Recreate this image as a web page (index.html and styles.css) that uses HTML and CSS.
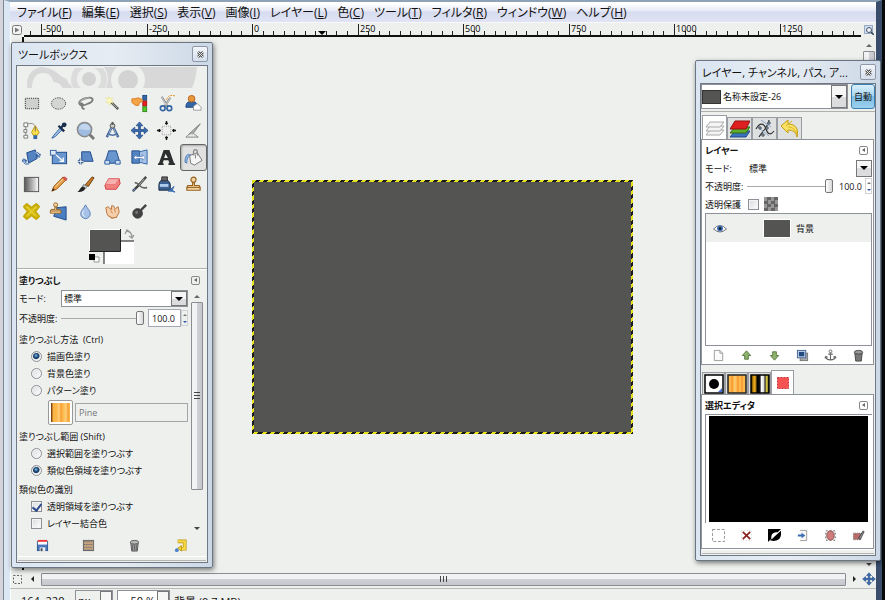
FILE: index.html
```
<!DOCTYPE html>
<html lang="ja">
<head>
    <meta charset="UTF-8">
    <meta name="viewport" content="width=device-width, initial-scale=1.0">
    <title>GIMP</title>
    <link rel="stylesheet" href="styles.css">
</head>
<body>
    <div class="desktop">
        <!-- Image window -->
        <main class="main-window">
            <nav class="menubar">
                <a href="#">ファイル(<u>F</u>)</a>
                <a href="#">編集(<u>E</u>)</a>
                <a href="#">選択(<u>S</u>)</a>
                <a href="#">表示(<u>V</u>)</a>
                <a href="#">画像(<u>I</u>)</a>
                <a href="#">レイヤー(<u>L</u>)</a>
                <a href="#">色(<u>C</u>)</a>
                <a href="#">ツール(<u>T</u>)</a>
                <a href="#">フィルタ(<u>R</u>)</a>
                <a href="#">ウィンドウ(<u>W</u>)</a>
                <a href="#">ヘルプ(<u>H</u>)</a>
            </nav>

            <div class="view">
                <button class="view-corner" aria-label="menu">
                    <svg width="10" height="10" viewBox="0 0 10 10"><rect x=".5" y=".5" width="9" height="9" rx="2" fill="#f4f4f4" stroke="#777"/><path d="M3 2.500L7.500 5L3 7.500z" fill="#777"/></svg>
                </button>
                <svg class="ruler" id="ruler"></svg>
                <button class="view-corner" aria-label="zoom">
                    <svg width="10" height="10" viewBox="0 0 10 10"><rect x=".5" y=".5" width="8" height="8" fill="#d4dfef" stroke="#4a6a9c" stroke-dasharray="1 1"/><circle cx="5" cy="5" r="2.500" fill="#eef3fa" stroke="#456"/><path d="M7 7l3 3" stroke="#345" stroke-width="1.500"/></svg>
                </button>

                <div class="ruler-v"></div>
                <div class="canvas"><div class="image"></div></div>
                <div class="vscroll">
                    <span class="arrow up"></span>
                    <span class="vthumb"></span>
                    <span class="arrow down"></span>
                </div>

                <button class="view-corner" aria-label="quick mask">
                    <svg width="9" height="9" viewBox="0 0 9 9"><rect x=".5" y=".5" width="8" height="8" fill="none" stroke="#666" stroke-dasharray="2 1.500"/></svg>
                </button>
                <div class="hscroll">
                    <span class="arrow left"></span>
                    <span class="hthumb"><i></i><i></i><i></i></span>
                    <span class="arrow right"></span>
                </div>
                <button class="view-corner" aria-label="navigate">
                    <svg width="14" height="14" viewBox="0 0 20 20"><use href="#move"/></svg>
                </button>
            </div>

            <footer class="statusbar">
                <span class="coords">164, 220</span>
                <span class="combo unit"><select aria-label="unit"><option>px</option></select><span class="combo-arrow plain"></span></span>
                <span class="combo zoom"><select aria-label="zoom"><option>50 %</option></select><span class="combo-arrow plain"></span></span>
                <span>背景 (0.7 MB)</span>
            </footer>
        </main>

        <!-- Toolbox -->
        <section class="window toolbox">
            <header class="titlebar"><h2>ツールボックス</h2><button class="close" aria-label="close"><svg width="7" height="7" viewBox="0 0 7 7"><path d="M1 1l5 5M6 1l-5 5" stroke="#555" stroke-width="2.500"/><path d="M1 1l5 5M6 1l-5 5" stroke="#eee" stroke-width="1"/></svg></button></header>
            <div class="window-body">
                <svg class="wilber" viewBox="0 0 190 22" width="190" height="22">
                    <path d="M10 22C9 8 16 2 25 1q9 1 14 5 6 6 14 8V1H180q-1 12-5 21z" fill="#d7d8d7"/>
                    <path d="M15 22c0-9 4-15 11-15s10 5 10 9c5 0 8 3 10 6z" fill="#eef0ee"/>
                    <path d="M35 1h22L53 20C49 10 43 4 35 1z" fill="#eef0ee"/>
                    <circle cx="72" cy="13" r="19" fill="#eef0ee"/><circle cx="111" cy="14" r="17" fill="#eef0ee"/>
                    <path d="M58 2a19 19 0 00-2 20h32A19 19 0 0086 2z" fill="#dbdcdb"/>
                    <circle cx="72" cy="13" r="12" fill="#eef0ee"/>
                    <circle cx="72" cy="13" r="7" fill="#d2d3d2"/><circle cx="111" cy="14" r="10" fill="#d2d3d2"/>
                </svg>

                <div class="tools">
                    <button aria-label="rect select"><svg viewBox="0 0 20 20"><rect x="3.500" y="4.500" width="14" height="11" fill="#cfd1cf" stroke="#222" stroke-dasharray="1 1"/></svg></button>
                    <button aria-label="ellipse select"><svg viewBox="0 0 20 20"><ellipse cx="10" cy="10" rx="7.500" ry="6" fill="#d4d6d4" stroke="#444" stroke-dasharray="1.500 1"/></svg></button>
                    <button aria-label="free select"><svg viewBox="0 0 20 20"><path d="M6 12C0 10 5 5 13 4c6-1 6 4 0 6-4 2-8 3-9 1 0-2 4-1 3 1-1 2-1 3 2 4" fill="none" stroke="#7b7b7b" stroke-width="2"/><path d="M4 9C5 6 10 4 14 4" fill="none" stroke="#ccc" stroke-width=".8"/></svg></button>
                    <button aria-label="fuzzy select"><svg viewBox="0 0 20 20"><path d="M8 8l8 8" stroke="#555" stroke-width="2.500"/><path d="M8 8l7 7" stroke="#aaa" stroke-width="1"/><path d="M6 3l1 2 3-1-1 3 2 2-3 0-1 3-1-3-3 0 2-2-2-3 3 1z" fill="#fffbc4" stroke="#ece083" stroke-width=".6"/></svg></button>
                    <button aria-label="color select"><svg viewBox="0 0 20 20"><rect x="13.500" y="1.500" width="4" height="5" fill="#3465a4" stroke="#204a87"/><rect x="13.500" y="7.500" width="4" height="5" fill="#e22" stroke="#a11"/><rect x="13.500" y="13.500" width="4" height="5" fill="#5c2" stroke="#382"/><path d="M2 5h3l4-1 4 2v2l-3 1-1 3H6L2 9z" fill="#f6a345" stroke="#d98026"/></svg></button>
                    <button aria-label="scissors"><svg viewBox="0 0 20 20"><path d="M5 3l6 10M14 4L8 13" stroke="#777" stroke-width="2"/><path d="M5 3l5 9M14 4l-5 8" stroke="#ddd"/><circle cx="6" cy="15" r="2.500" fill="none" stroke="#3465a4" stroke-width="1.700"/><circle cx="13" cy="15" r="2.500" fill="none" stroke="#3465a4" stroke-width="1.700"/><path d="M10 6c2-5 5-5 9-4" fill="none" stroke="#e98b17" stroke-dasharray="2 1"/></svg></button>
                    <button aria-label="foreground select"><svg viewBox="0 0 20 20"><path d="M2 14c0-5 2-6 6-6s6 1 6 6z" fill="#3465a4" stroke="#204a87"/><circle cx="8" cy="5" r="3.500" fill="#e9963a" stroke="#b3641a"/><path d="M10 17v-4l4-3 4 4v3z" fill="#fff" stroke="#999"/></svg></button>

                    <button aria-label="paths"><svg viewBox="0 0 20 20"><path d="M4 3v14M4 4c6-3 9-1 10 2" fill="none" stroke="#888"/><path d="M2 2h4v4H2zM2 9h3v3H2zM2 15h4v3H2z" fill="#fff" stroke="#777"/><path d="M14 5l4 7-2 3h-4l-2-3z" fill="#fbe04e" stroke="#b89412"/><path d="M14 6v5" stroke="#765"/><rect x="12" y="15" width="4" height="4" fill="#3465a4"/></svg></button>
                    <button aria-label="color picker"><svg viewBox="0 0 20 20"><path d="M12 7L5 15l-2 3 1 0 3-2 7-7" fill="#9fc0e4" stroke="#3465a4"/><path d="M10 5l6 6M13 7l3-4" stroke="#1b2f4c" stroke-width="2.500"/><circle cx="16" cy="4" r="2.500" fill="#1b2f4c"/></svg></button>
                    <button aria-label="magnify"><svg viewBox="0 0 20 20"><path d="M13 13l6 6" stroke="#777" stroke-width="3"/><circle cx="9" cy="9" r="7.500" fill="#9fbbe2" stroke="#888" stroke-width="1.500"/><path d="M3 9a6 6 0 0112 0c-4 2-7-1-12 0z" fill="#c3d5ee"/></svg></button>
                    <button aria-label="measure"><svg viewBox="0 0 20 20"><path d="M10 5L4 17M10 5l6 12" stroke="#3b5f92" stroke-width="2.500"/><path d="M10 5L5 16M10 5l5 11" stroke="#c4d2e6" stroke-width=".8"/><path d="M5 13q5 4 10 0" fill="none" stroke="#4a6fa4" stroke-width="1.500"/><circle cx="10" cy="5" r="2.500" fill="#ccc" stroke="#555"/><path d="M10 1v3" stroke="#555" stroke-width="2"/></svg></button>
                    <button aria-label="move"><svg viewBox="0 0 20 20"><g id="move" fill="#3a6cb0" stroke="#1f4680" stroke-width=".8"><path d="M10 1l3.500 4H11v4h4V6.500l4 3.500-4 3.500V11h-4v4h2.500L10 19l-3.500-4H9v-4H5v2.500L1 10l4-3.500V9h4V5H6.500z"/></g></svg></button>
                    <button aria-label="align"><svg viewBox="0 0 20 20"><rect x="5.500" y="5.500" width="9" height="9" fill="#eee" stroke="#999" stroke-dasharray="1 1"/><path d="M10 0v4M8.500 2.500h3M10 20v-4M8.500 17.500h3M0 10h4M2.500 8.500v3M20 10h-4M17.500 8.500v3" stroke="#111" stroke-width="1.500"/></svg></button>
                    <button aria-label="crop"><svg viewBox="0 0 20 20"><path d="M2 17L17 3 9 14M2 17h13l-5-4" fill="#e6e6e6" stroke="#888"/><path d="M5 14L17 3l-7 9z" fill="#c4c4c4" stroke="#888"/></svg></button>

                    <button aria-label="rotate"><svg viewBox="0 0 20 20"><path d="M5 5l9-3 2 9-9 5z" fill="#5584c2" stroke="#204a87"/><path d="M14 5c3 0 4 2 4 4m1-3l-1 3-3-1M7 17c-3 0-5-1-5-5m-2 2l2-2 3 2" fill="none" stroke="#3465a4" stroke-width="2"/><path d="M14 5c3 0 4 2 4 4M7 17c-3 0-5-1-5-5" fill="none" stroke="#fff" stroke-width=".8"/></svg></button>
                    <button aria-label="scale"><svg viewBox="0 0 20 20"><rect x="3.500" y="4.500" width="15" height="12" fill="#6a96cf" stroke="#204a87"/><rect x="1.500" y="2.500" width="6" height="5" fill="#dfe9f5" stroke="#3465a4"/><path d="M7 7l8 7M15 10v4h-4" stroke="#fff" stroke-width="1.300" fill="none"/></svg></button>
                    <button aria-label="shear"><svg viewBox="0 0 20 20"><path d="M6 4h9l3 10H6z" fill="#5e8bc8" stroke="#204a87"/><path d="M2 14h6M5 11v6" stroke="#204a87" stroke-width="3"/><path d="M2 14h6M5 11v6" stroke="#fff" stroke-width="1"/></svg></button>
                    <button aria-label="perspective"><svg viewBox="0 0 20 20"><path d="M6 3h8l4 13H2z" fill="#6a96cf" stroke="#204a87"/><path d="M2 13h5v4H2zM13 13h5v4h-5z" fill="#cfdef0" stroke="#3465a4"/></svg></button>
                    <button aria-label="flip"><svg viewBox="0 0 20 20"><path d="M2 3h8v13H2z" fill="#5584c2" stroke="#204a87"/><path d="M10 4l8-2v15l-8-2z" fill="#a5c2e6" stroke="#3465a4"/><path d="M4 10l3-3v2h6V7l3 3-3 3v-2H7v2z" fill="#fff" stroke="#3465a4" stroke-width=".6"/></svg></button>
                    <button aria-label="text"><svg viewBox="0 0 20 20"><path d="M7 2h6l5 14h1v2h-7v-2h1l-1-3H7l-1 3h1v2H1v-2h1zM9 6l-1.500 4.500h4z" fill="#2c2e2f" fill-rule="evenodd"/></svg></button>
                    <button class="active" aria-label="bucket fill"><svg viewBox="0 0 20 20"><path d="M6 8l8-3 5 8-8 5-4-2z" fill="#f6f6f6" stroke="#777"/><path d="M10 8V4c0-3 4-3 4 0v4" fill="none" stroke="#888" stroke-width="1.300"/><path d="M12 7v4" stroke="#777"/><path d="M7 7C3 6 1 8 1 15l2 1c0-4 1-7 4-9z" fill="#8fb4e0" stroke="#3b6cae" stroke-width=".7"/></svg></button>

                    <button aria-label="blend"><svg viewBox="0 0 20 20"><defs><linearGradient id="gr"><stop offset="0" stop-color="#555"/><stop offset="1" stop-color="#fff"/></linearGradient></defs><rect x="2.500" y="2.500" width="15" height="15" fill="url(#gr)" stroke="#555"/></svg></button>
                    <button aria-label="pencil"><svg viewBox="0 0 20 20"><path d="M3 17l2-5L15 2l3 3L8 15z" fill="#e5a04d" stroke="#9a5812"/><path d="M14 3l3-1 2 2-1 2z" fill="#e25a5a" stroke="#a33" stroke-width=".6"/><path d="M3 17l1.500-3 1.500 1.500z" fill="#222"/><path d="M7 12l8-8" stroke="#fbd89c"/></svg></button>
                    <button aria-label="paintbrush"><svg viewBox="0 0 20 20"><path d="M10 10l7-8 2 1-6 9z" fill="#c77a2a" stroke="#6e3c08"/><path d="M8 10l4 2-2 2-3-2z" fill="#ccc" stroke="#777"/><path d="M7 12l3 2c-2 4-5 4-9 4 3-1 3-5 6-6z" fill="#222"/></svg></button>
                    <button aria-label="eraser"><svg viewBox="0 0 20 20"><path d="M6 4h11l1 5-4 6H3l-1-4z" fill="#f2807f" stroke="#d04040"/><path d="M6 4h11l-4 6H2.500z" fill="#f8b0ae" stroke="#df6b6b" stroke-width=".7"/></svg></button>
                    <button aria-label="airbrush"><svg viewBox="0 0 20 20"><path d="M17 2L8 12l-5 5" stroke="#444" stroke-width="2.500"/><path d="M5 8c3 0 4 2 5 3s3 4 8 2" fill="none" stroke="#666" stroke-width="1.800"/><path d="M15 4l-5 6" stroke="#ddd" stroke-width=".8"/><path d="M2 18l3-4 1 1z" fill="#5b90d6"/></svg></button>
                    <button aria-label="ink"><svg viewBox="0 0 20 20"><path d="M5 5h5q4 2 4 5v6H2v-6q0-3 3-5z" fill="#3b5f8e" stroke="#1c2c42"/><path d="M5 2h6v4H5z" fill="#666" stroke="#333"/><path d="M3 11h9" stroke="#aecbec" stroke-width="3"/><path d="M12 17l6-5-2 4 3 2-4-1z" fill="#3b6cae" stroke="#3b6cae"/></svg></button>
                    <button aria-label="clone"><svg viewBox="0 0 20 20"><g id="stamp" fill="#f3d3a2" stroke="#96631f" stroke-width="1.200"><circle cx="10" cy="5" r="2.700"/><path d="M9 8h2v3h5l1 2v3H3v-3l1-2h5z"/><path d="M3 13h14"/></g></svg></button>

                    <button aria-label="heal"><svg viewBox="0 0 20 20"><path d="M5 2l5 4 5-4 3 3-4 5 4 5-3 3-5-4-5 4-3-3 4-5-4-5z" fill="#d8be10" stroke="#c4aa0a" stroke-width="2" stroke-linejoin="round"/><path d="M5 5l10 10M15 5L5 15" stroke="#ecd84a" stroke-width="1.500" stroke-dasharray="1 1"/></svg></button>
                    <button aria-label="perspective clone"><svg viewBox="0 0 20 20"><path d="M8 6l10-1v14L5 15z" fill="#4a7fc4" stroke="#204a87"/><g transform="translate(-1 -1) scale(.8)"><use href="#stamp"/></g></svg></button>
                    <button aria-label="blur"><svg viewBox="0 0 20 20"><path d="M10 3c2 4 5 6 5 9.500a5 5 0 01-10 0C5 9 8 7 10 3z" fill="#a6c2e8" stroke="#5c7fb5"/><path d="M8 9c-2 3-1 5 1 6" stroke="#fff" fill="none"/></svg></button>
                    <button aria-label="smudge"><svg viewBox="0 0 20 20"><path d="M3 6l2-1 4 3 0-4 2 0 2 3 3-2 1 6-3 5-5 1-4-3-1-2z" fill="#f4cfa9" stroke="#b9733b"/><path d="M5 14l5 3 5-1M8 9l2 3M12 7l1 4" stroke="#c9854f" fill="none"/></svg></button>
                    <button aria-label="dodge"><svg viewBox="0 0 20 20"><circle cx="8" cy="12" r="5" fill="#444" stroke="#333"/><path d="M11 9l6-6" stroke="#444" stroke-width="2.500"/><circle cx="7" cy="11" r="1.500" fill="#777"/></svg></button>
                </div>

                <div class="colors">
                    <svg width="46" height="36" viewBox="0 0 46 36">
                        <path d="M15 12h30v23H15z" fill="#fff"/><path d="M15 35V12h30" fill="none" stroke="#111"/>
                        <path d="M0 0h32v23H0z" fill="#fff"/><path d="M1 1h30v21H1z" fill="#545452"/><path d="M31.500 0v22.500H0" fill="none" stroke="#222"/>
                        <path d="M5 28h5v5H5z" fill="#fff" stroke="#999"/><path d="M0 25h6v6H0z" fill="#000"/>
                        <path d="M36 5l2-4 3 2M37 2c4 0 6 3 6 7M40 7l3 2 2-3" fill="none" stroke="#999" stroke-width="1.300"/>
                    </svg>
                </div>

                <div class="options">
                    <div class="dock-head"><h3>塗りつぶし</h3><button class="tab-menu" aria-label="tab menu"></button></div>
                    <div class="scroller">
                        <form class="option-list">
                            <div class="row">
                                <label for="mode">モード:</label>
                                <span class="combo"><select id="mode"><option>標準</option></select><span class="combo-arrow"></span></span>
                            </div>
                            <div class="row">
                                <label for="opacity">不透明度:</label>
                                <input type="range" id="opacity" value="100">
                                <span class="spin"><input type="text" value="100.0" aria-label="opacity value"><span class="spin-buttons"></span></span>
                            </div>
                            <h4>塗りつぶし方法&nbsp; (Ctrl)</h4>
                            <label class="choice"><input type="radio" name="fill" checked>描画色塗り</label>
                            <label class="choice"><input type="radio" name="fill">背景色塗り</label>
                            <label class="choice"><input type="radio" name="fill">パターン塗り</label>
                            <div class="pattern"><button type="button" class="pine" aria-label="pattern"></button><input type="text" value="Pine" aria-label="pattern name"></div>
                            <h4>塗りつぶし範囲 (Shift)</h4>
                            <label class="choice"><input type="radio" name="area">選択範囲を塗りつぶす</label>
                            <label class="choice"><input type="radio" name="area" checked>類似色領域を塗りつぶす</label>
                            <h4>類似色の識別</h4>
                            <label class="choice"><input type="checkbox" checked>透明領域を塗りつぶす</label>
                            <label class="choice"><input type="checkbox">レイヤー結合色</label>
                            <div class="row threshold"><input type="range" value="15" aria-label="threshold"><span class="spin"><input type="text" value="15.0" aria-label="threshold value"><span class="spin-buttons"></span></span></div>
                        </form>
                        <div class="dock-scroll">
                            <span class="arrow up"></span>
                            <span class="dock-thumb"><i></i><i></i><i></i></span>
                            <span class="arrow down"></span>
                        </div>
                    </div>
                    <div class="actions">
                        <button aria-label="save"><svg viewBox="0 0 14 14"><rect x="1.500" y="2.500" width="11" height="10" fill="#4a78bd" stroke="#2d5390"/><path d="M2 1h10v5H2z" fill="#fff"/><path d="M2 1h10v2H2z" fill="#e33"/><path d="M4 9h6v4H4z" fill="#eee"/><path d="M5 10h2v3H5z" fill="#345"/></svg></button>
                        <button aria-label="restore"><svg viewBox="0 0 14 14"><rect x="1.500" y="1.500" width="11" height="11" fill="#b9a58c" stroke="#666"/><path d="M2 3h10M2 6h10M2 9h10M2 12h10" stroke="#555" stroke-dasharray="1 1"/><path d="M3 4h9M3 7h9M3 10h9" stroke="#db9d64" stroke-dasharray="2 1"/></svg></button>
                        <button aria-label="delete"><svg viewBox="0 0 14 14"><path d="M3 4h8l-1 9H4z" fill="#999" stroke="#555"/><ellipse cx="7" cy="3.500" rx="4.500" ry="2" fill="#bbb" stroke="#555"/><path d="M5 6v6M7 6v6M9 6v6" stroke="#666"/></svg></button>
                        <button aria-label="reset"><svg viewBox="0 0 14 14"><path d="M4 2.500h7.500v8H7" fill="none" stroke="#b8940c" stroke-width="4"/><path d="M4 2.500h7.500v8H7" fill="none" stroke="#f7d842" stroke-width="2.500"/><path d="M8 7v6l-4-3z" fill="#f7d842" stroke="#b8940c"/><circle cx="3" cy="12" r="2" fill="#4a82cc"/></svg></button>
                    </div>
                </div>
                <div class="grip"></div>
            </div>
        </section>

        <!-- Layers dock -->
        <section class="window dock">
            <header class="titlebar"><h2>レイヤー, チャンネル, パス, ア...</h2><button class="close" aria-label="close"><svg width="7" height="7" viewBox="0 0 7 7"><path d="M1 1l5 5M6 1l-5 5" stroke="#555" stroke-width="2.500"/><path d="M1 1l5 5M6 1l-5 5" stroke="#eee" stroke-width="1"/></svg></button></header>
            <div class="window-body">
                <div class="image-select">
                    <span class="combo"><span class="swatch"></span><select aria-label="image"><option>名称未設定-26</option></select><span class="combo-arrow"></span></span>
                    <button class="auto">自動</button>
                </div>

                <div class="tabs">
                    <button class="current" aria-label="layers"><svg viewBox="0 0 20 20"><g fill="#f4f4f4" stroke="#aaa"><path d="M1 17l4-5h14l-4 5z"/><path d="M1 13l4-5h14l-4 5z"/><path d="M1 9l4-5h14l-4 5z"/></g></svg></button>
                    <button aria-label="channels"><svg viewBox="0 0 20 20"><path d="M0 18l5-6h15l-4 6z" fill="#3b72c0" stroke="#204a87"/><path d="M0 14l5-6h15l-4 6z" fill="#5fae2c" stroke="#2f6b10"/><path d="M0 10l5-8h15l-4 8z" fill="#e02020" stroke="#901010"/></svg></button>
                    <button aria-label="paths"><svg viewBox="0 0 20 20"><path d="M1 10C5 3 9 4 11 10s5 6 8 2M4 18C8 12 13 8 14 1" fill="none" stroke="#333" stroke-width="1.200"/><path d="M6 1l10 7M3 8l11 9" stroke="#8aa6cc"/><path d="M4 8h2v2H4zM11 8h2v2h-2zM7 15h2v2H7zM13 3h2v2h-2z" fill="#fff" stroke="#345"/></svg></button>
                    <button aria-label="history"><svg viewBox="0 0 20 20"><path d="M1 7l7-6v4c7 0 11 4 9 13-1-5-4-7-9-7v3z" fill="#f9e267" stroke="#c79c0c"/><path d="M6 7l6-5M8 8c5 0 8 3 9 8" fill="none" stroke="#d9b422"/></svg></button>
                </div>

                <div class="page">
                    <div class="dock-head"><h3>レイヤー</h3><button class="tab-menu" aria-label="tab menu"></button></div>
                    <div class="row">
                        <label for="lmode">モード:</label>
                        <span class="combo flat"><select id="lmode"><option>標準</option></select><span class="combo-arrow"></span></span>
                    </div>
                    <div class="row">
                        <label for="lopacity">不透明度:</label>
                        <input type="range" id="lopacity" value="100">
                        <span class="spin flat"><input type="text" value="100.0" aria-label="opacity value"><span class="spin-buttons"></span></span>
                    </div>
                    <div class="row lock"><label for="lock">透明保護</label><input type="checkbox" id="lock"><span class="checker"></span></div>
                    <div class="layer-list">
                        <div class="layer">
                            <svg width="14" height="9" viewBox="0 0 14 9"><path d="M.5 5Q7-2 13.500 5 7 11 .5 5z" fill="#fff" stroke="#777"/><circle cx="7" cy="4.500" r="3" fill="#3f74b8"/><circle cx="7" cy="4.500" r="1.300" fill="#111"/></svg>
                            <span class="thumb"></span>
                            <span>背景</span>
                        </div>
                    </div>
                    <div class="actions">
                        <button aria-label="new"><svg viewBox="0 0 14 14"><path d="M2.500 1.500h6l3 3v8h-9zM8.500 1.500v3h3" fill="#fafafa" stroke="#999"/></svg></button>
                        <button aria-label="raise"><svg viewBox="0 0 14 14"><path d="M7 2l4.500 5H9v4H5V7H2.500z" fill="#8fb36f" stroke="#567a3a"/></svg></button>
                        <button aria-label="lower"><svg viewBox="0 0 14 14"><path d="M7 12l4.500-5H9V3H5v4H2.500z" fill="#8fb36f" stroke="#567a3a"/></svg></button>
                        <button aria-label="duplicate"><svg viewBox="0 0 14 14"><rect x="4.500" y="4.500" width="8" height="8" fill="#aaa" stroke="#777"/><rect x="1.500" y="1.500" width="9" height="8" fill="#dbe6f4" stroke="#3b5f92"/><path d="M3 3h6v5H3z" fill="#234a80"/></svg></button>
                        <button aria-label="anchor"><svg viewBox="0 0 14 14"><circle cx="7" cy="2.500" r="1.500" fill="none" stroke="#666"/><path d="M7 4v8M4.500 5.500h5M1.500 8c1 5 10 5 11 0M1 10l1-2 2 1M13 10l-1-2-2 1" fill="none" stroke="#666" stroke-width="1.200"/></svg></button>
                        <button aria-label="delete"><svg viewBox="0 0 14 14"><path d="M3 4h8l-1 9H4z" fill="#777" stroke="#444"/><ellipse cx="7" cy="3.500" rx="4.500" ry="2" fill="#999" stroke="#444"/></svg></button>
                    </div>
                </div>

                <div class="tabs lower">
                    <button aria-label="brushes"><svg viewBox="0 0 20 20"><rect x="1" y="1" width="18" height="18" fill="#fff" stroke="#000" stroke-width="1.500"/><circle cx="10" cy="10" r="5" fill="#000"/><path d="M18 14v4h-4z" fill="#4a6fd0"/></svg></button>
                    <button aria-label="patterns"><svg viewBox="0 0 20 20"><rect x="1" y="1" width="18" height="18" fill="#fdb94d" stroke="#222" stroke-width="1.500"/><path d="M5 2v16M11 2v16M15 2v16" stroke="#f08a24"/><path d="M8 2v16" stroke="#ffd38a"/></svg></button>
                    <button aria-label="gradients"><svg viewBox="0 0 20 20"><defs><linearGradient id="gold"><stop offset="0" stop-color="#3a2500"/><stop offset=".15" stop-color="#d89b10"/><stop offset=".22" stop-color="#f0b020"/><stop offset=".35" stop-color="#000"/><stop offset=".5" stop-color="#111"/><stop offset=".58" stop-color="#fff"/><stop offset=".7" stop-color="#ddd"/><stop offset=".78" stop-color="#333"/><stop offset=".88" stop-color="#f6e04c"/><stop offset="1" stop-color="#000"/></linearGradient></defs><rect x="1" y="1" width="18" height="18" fill="url(#gold)" stroke="#000" stroke-width="1.500"/></svg></button>
                    <button class="current" aria-label="selection"><svg viewBox="0 0 20 20"><rect x="4.500" y="4.500" width="11" height="11" fill="#f55252" stroke="#c33" stroke-dasharray="2 1"/></svg></button>
                </div>

                <div class="page">
                    <div class="dock-head"><h3>選択エディタ</h3><button class="tab-menu" aria-label="tab menu"></button></div>
                    <div class="selection-view"><div class="mask"></div></div>
                    <div class="actions">
                        <button aria-label="all"><svg viewBox="0 0 14 14"><rect x=".5" y=".5" width="13" height="13" fill="none" stroke="#888" stroke-dasharray="3 2"/></svg></button>
                        <button aria-label="none"><svg viewBox="0 0 14 14"><rect x="1.500" y="1.500" width="11" height="11" fill="none" stroke="#ccc" stroke-dasharray="1 2"/><path d="M3 3l8 8M11 3l-8 8" stroke="#8c2020" stroke-width="1.800"/></svg></button>
                        <button aria-label="invert"><svg viewBox="0 0 14 14"><path d="M0 0h14L0 14z" fill="#000"/><path d="M14 2v4c0 4-4 7-8 7l-4-1z" fill="#000"/><path d="M4 11C2 7 6 2 11 4z" fill="#fff"/></svg></button>
                        <button aria-label="to channel"><svg viewBox="0 0 14 14"><path d="M4.500 1.500h7v11h-7" fill="#f6f6f6" stroke="#999"/><path d="M2 6h4V4l4 3-4 3V8H2z" fill="#3a6cb0"/></svg></button>
                        <button aria-label="to path"><svg viewBox="0 0 14 14"><rect x="2" y="2" width="10" height="10" fill="none" stroke="#555" stroke-dasharray="2 2"/><ellipse cx="7" cy="7" rx="4" ry="5" fill="#d07a7a" stroke="#855"/></svg></button>
                        <button aria-label="stroke"><svg viewBox="0 0 14 14"><rect x="1.500" y="4.500" width="8" height="7" fill="#b76a6a" stroke="#777" stroke-dasharray="1 1"/><path d="M7 10l5-8 1 1-4 8z" fill="#999" stroke="#444"/></svg></button>
                    </div>
                </div>
                <div class="grip"></div>
            </div>
        </section>
    </div>

    <script src="ruler.js"></script>
</body>
</html>
```
FILE: styles.css
```
:root {
    --panel: #eef0ee;
    --line: #8e9198;
    --fill: #545452;
    --text: #111;
}

* {
    box-sizing: border-box;
}

body {
    margin: 0;
    font-family: "Open Sans", "Noto Sans CJK JP", sans-serif;
    font-feature-settings: "palt";
    font-size: 9px;
    color: var(--text);
}

h2, h3, h4 {
    margin: 0;
    font-weight: normal;
}

button {
    display: flex;
    align-items: center;
    justify-content: center;
    padding: 0;
    border: none;
    background: none;
    font: inherit;
    color: inherit;
}

input, select {
    margin: 0;
    font: inherit;
    color: inherit;
}

.desktop {
    position: relative;
    height: 100vh;
    overflow: hidden;
    padding: 0 3px 0 4px;
    background: linear-gradient(90deg, #d3d4dc 0, #d3d4dc 50%, #08090b 50%);
}

/* Image window */
.main-window {
    display: flex;
    flex-direction: column;
    height: calc(100% + 12px);
    border-style: solid;
    border-width: 2px 6px 0 6px;
    border-color: #8fa3b8 #3a4e6c #fff #dbe7f3;
    box-shadow: inset 1px 0 #fff, -1px 0 #7c8590;
    background: var(--panel);
}

.menubar {
    display: flex;
    gap: 10px;
    height: 21px;
    padding: 0 7px;
    align-items: center;
    background: linear-gradient(#fff 10%, #e6e9f6 45%, #d7dbef 50%, #e0e4f4);
    border-bottom: 1px solid #f8f8fa;
    font-size: 12px;
}

.menubar a {
    color: var(--text);
    text-decoration: none;
    white-space: nowrap;
}

.view {
    display: grid;
    flex: 1;
    grid-template-columns: 14px 1fr 15px;
    grid-template-rows: 14px 1fr 18px;
}

.view-corner svg {
    display: block;
}

.ruler {
    width: 100%;
    height: 14px;
    border-bottom: 2px solid #111;
    font-size: 9px;
}

.ruler-v {
    border-right: 2px solid #111;
}

.canvas {
    display: flex;
    align-items: center;
    justify-content: center;
    padding-top: 6px;
}

.image {
    width: 381px;
    height: 254px;
    padding: 2px;
    background:
        linear-gradient(var(--fill), var(--fill)) content-box,
        repeating-linear-gradient(135deg, #e6e21c 0, #e6e21c 3px, #1a1a1a 3px, #1a1a1a 6px);
}

.vscroll, .hscroll, .dock-scroll {
    display: flex;
    align-items: center;
    gap: 4px;
}

.vscroll, .dock-scroll {
    flex-direction: column;
}

.vscroll {
    padding: 7px 0 4px;
}

.hscroll {
    gap: 7px;
    padding: 0 5px 0 7px;
}

.arrow {
    border: 3px solid transparent;
}

.arrow.up {
    border-top: none;
    border-bottom-color: #666;
}

.arrow.down {
    border-bottom: none;
    border-top-color: #444;
}

.arrow.left {
    border-left: none;
    border-right-color: #222;
}

.arrow.right {
    border-right: none;
    border-left-color: #222;
}

.hthumb, .vthumb, .dock-thumb {
    display: flex;
    flex: 1;
    align-items: center;
    justify-content: center;
    gap: 1px;
    border: 1px solid #8b8d92;
    border-radius: 1px;
}

.hthumb {
    height: 13px;
    background: linear-gradient(#f0f2f4 45%, #cfcfd6 50%, #c6c6cd);
}

.vthumb, .dock-thumb {
    width: 12px;
    flex-direction: column;
    background: linear-gradient(90deg, #f0f2f4 45%, #cfcfd6 50%, #c6c6cd);
}

.hthumb i {
    width: 2px;
    height: 6px;
    border-left: 1px solid #444;
}

.dock-thumb i {
    width: 6px;
    height: 2px;
    border-top: 1px solid #444;
}

.statusbar {
    display: flex;
    align-items: center;
    gap: 2px;
    height: 24px;
    padding: 1px 11px;
    border-top: 1px solid #b9bbb9;
    font-size: 11px;
}

.coords {
    width: 52px;
}

.statusbar .combo {
    flex: none;
    height: 22px;
    margin-right: 2px;
}

.statusbar .unit {
    width: 38px;
    background: var(--panel);
}

.statusbar .zoom {
    width: 53px;
}

.zoom select {
    text-align: right;
}

/* Floating windows */
.window {
    position: absolute;
    padding: 0 4px 4px;
    border: 1px solid #6c7682;
    border-radius: 2px;
    background: linear-gradient(90deg, #dbe6f2, #e6ecf3 50%, #ccd8e6);
    box-shadow: 1px 2px 5px rgba(0, 0, 0, 0.5);
}

.toolbox {
    top: 42px;
    left: 11px;
    width: 202px;
}

.dock {
    top: 60px;
    right: 4px;
    width: 186px;
}

.titlebar {
    display: flex;
    align-items: center;
    justify-content: space-between;
    height: 22px;
    padding-left: 2px;
    white-space: nowrap;
}

.titlebar h2 {
    font-size: 11px;
}

.close {
    width: 16px;
    height: 16px;
    border: 1px solid #8d98a8;
    border-radius: 2px;
    background: linear-gradient(#f3f6fa, #d5dfeb);
}

.window-body {
    border: 1px solid #6f7884;
    background: var(--panel);
}

.wilber {
    display: block;
}

.tools {
    display: grid;
    grid-template-columns: repeat(7, 27px);
    grid-auto-rows: 27px;
    padding: 2px 1px 0;
}

.tools svg {
    width: 19px;
    height: 19px;
}

.tools .active {
    border: 1px solid #666;
    border-radius: 3px;
    background: #e0e1e0;
    box-shadow: inset 1px 1px 2px #aaa;
}

.colors {
    display: flex;
    justify-content: center;
    height: 44px;
    padding-top: 4px;
    border-bottom: 1px solid #aeb0ae;
}

.options {
    padding: 0 3px 0 2px;
    border-top: 1px solid #fff;
}

.dock-head {
    display: flex;
    align-items: center;
    justify-content: space-between;
    height: 20px;
    padding-right: 4px;
}

.dock-head h3 {
    font-size: 9px;
    font-weight: bold;
}

.tab-menu {
    width: 9px;
    height: 9px;
    border: 1px solid #888;
    border-radius: 2px;
}

.tab-menu::before {
    content: "";
    border: 2px solid transparent;
    border-left: none;
    border-right: 3px solid #666;
}

.scroller {
    display: flex;
    gap: 3px;
    height: 244px;
    overflow: hidden;
}

.option-list {
    flex: 1;
    min-width: 0;
}

.option-list h4 {
    height: 17px;
    margin-top: 2px;
    font-size: 9px;
    line-height: 17px;
}

.row {
    display: flex;
    align-items: center;
    gap: 4px;
    height: 22px;
    white-space: nowrap;
}

.row:first-child {
    height: 17px;
}

.row label {
    width: 38px;
}

.combo {
    display: flex;
    flex: 1;
    align-items: center;
    min-width: 0;
    height: 17px;
    border: 1px solid #8e9198;
    background: #fff;
}

.combo select {
    flex: 1;
    min-width: 0;
    height: 100%;
    padding: 0 2px;
    border: none;
    background: none;
    appearance: none;
}

.combo-arrow {
    display: flex;
    align-items: center;
    justify-content: center;
    align-self: stretch;
    width: 16px;
    border: 1px solid #777;
    background: linear-gradient(#f6f6f6 50%, #dcdcdf 50%);
}

.combo-arrow::before {
    content: "";
    border: 4px solid transparent;
    border-top-color: #000;
    border-bottom: none;
}

.combo-arrow.plain {
    width: 12px;
}

.combo-arrow.plain::before {
    display: none;
}

.combo.flat {
    border: none;
}

input[type="range"] {
    flex: 1;
    min-width: 0;
    height: 14px;
    background: linear-gradient(#a9aba9, #a9aba9) center / 100% 1px no-repeat;
    appearance: none;
}

input[type="range"]::-webkit-slider-thumb {
    width: 8px;
    height: 14px;
    border: 1px solid #777;
    border-radius: 2px;
    background: linear-gradient(90deg, #fff, #d6d7d9);
    appearance: none;
}

.spin {
    display: flex;
    align-items: center;
    width: 40px;
    height: 18px;
}

.spin input {
    flex: 1;
    min-width: 0;
    height: 100%;
    padding: 0 3px;
    border: 1px solid #a3a8b4;
    background: #fff;
}

.spin-buttons {
    display: flex;
    flex-direction: column;
    align-items: center;
    justify-content: space-around;
    width: 7px;
    height: 16px;
    border: 1px solid #cfd1d4;
}

.spin-buttons::before, .spin-buttons::after {
    content: "";
    border: 2px solid transparent;
}

.spin-buttons::before {
    border-top: none;
    border-bottom-color: #777;
}

.spin-buttons::after {
    border-bottom: none;
    border-top-color: #2f55a4;
}

.spin.flat {
    width: 35px;
}

.spin.flat input {
    padding: 0 2px;
    border: none;
}

.choice {
    display: flex;
    align-items: center;
    gap: 5px;
    height: 17px;
    padding-left: 12px;
    white-space: nowrap;
}

input[type="radio"], input[type="checkbox"] {
    flex: none;
    width: 11px;
    height: 11px;
    border: 1px solid #8d9096;
    background: linear-gradient(135deg, #d8dade, #fff);
    box-shadow: inset 0 0 0 1px #f4f4f4;
    appearance: none;
}

input[type="radio"] {
    border-radius: 50%;
}

input[type="radio"]:checked {
    background: radial-gradient(circle at 45% 40%, #8ec3e6 0, #1c4a7a 2px, #163a64 3px, #eee 4px);
}

input[type="checkbox"]:checked::before {
    content: "";
    display: block;
    width: 4px;
    height: 7px;
    margin: 0 auto;
    border: solid #2b4b8c;
    border-width: 0 2px 2px 0;
    transform: rotate(38deg);
}

.pattern {
    display: flex;
    align-items: center;
    gap: 2px;
    height: 27px;
    padding-left: 29px;
}

.pattern input {
    flex: 1;
    min-width: 0;
    height: 19px;
    padding: 0 3px;
    border: 1px solid #a3a5a8;
    background: var(--panel);
    color: #777;
}

.pine {
    width: 25px;
    height: 25px;
    padding: 2px;
    border: 1px solid #999;
    border-radius: 2px;
    background:
        linear-gradient(90deg, #7d4310 0, #8f5015 1px, #fcb444 2px, #fdb94d 6px, #ffcf7e 8px, #f7a033 10px, #fdb94d 12px, #ffd07c 15px, #f7a033 17px, #fdb94d) content-box,
        #fff;
}

.threshold {
    padding-left: 46px;
}

.dock-scroll {
    width: 12px;
    padding: 5px 0 4px;
    margin-right: 1px;
}

.dock-scroll .dock-thumb {
    flex: none;
    height: 188px;
}

.dock-scroll .down {
    margin-top: auto;
}

.actions {
    display: flex;
    align-items: center;
    justify-content: space-around;
    height: 22px;
}

.actions svg {
    display: block;
    width: 13px;
    height: 13px;
}

.grip {
    height: 5px;
    margin: 0 1px 1px;
    border-top: 1px solid #fff;
    border-bottom: 1px solid #b4b6b4;
}

/* Layers dock */
.image-select {
    display: flex;
    gap: 3px;
    padding-bottom: 2px;
    border-bottom: 1px solid #aeb0ae;
}

.image-select .combo {
    height: 25px;
}

.swatch {
    width: 19px;
    height: 14px;
    border: 1px solid #333;
    background: var(--fill);
}

.auto {
    width: 24px;
    border: 1px solid #3c7fb1;
    border-radius: 3px;
    background: linear-gradient(#d9effb, #a4d3ee 50%, #7fbde4 50%, #9bd0ee);
}

.tabs {
    display: flex;
    align-items: flex-end;
    height: 27px;
    padding-left: 1px;
}

.tabs button {
    width: 25px;
    height: 22px;
    border: 1px solid #9a9da4;
    border-bottom: none;
    background: #dfe0e0;
}

.tabs .current {
    height: 24px;
    background: #fff;
}

.tabs svg {
    width: 20px;
    height: 20px;
}

.tabs.lower {
    height: 29px;
}

.tabs.lower button {
    width: 23px;
}

.page {
    margin: 0 1px 0 0;
    padding: 1px 1px 0 3px;
    border: 1px solid var(--line);
    background: #fff;
}

.page .dock-head, .page .row {
    height: 18px;
}

.page .actions {
    height: 18px;
}

.page .lock {
    gap: 5px;
}

.checker {
    width: 14px;
    height: 14px;
    background: repeating-conic-gradient(#666 0 25%, #999 0 50%) 0 0 / 7px 7px;
}

.layer-list {
    height: 133px;
    border: 1px solid var(--line);
    background: #fff;
}

.layer {
    display: flex;
    align-items: center;
    gap: 5px;
    height: 28px;
    padding-left: 7px;
    background: var(--panel);
}

.thumb {
    width: 28px;
    height: 19px;
    margin-left: 31px;
    border: 1px solid #fff;
    background: var(--fill);
}

.selection-view {
    padding: 1px 4px 1px 3px;
    border-top: 1px solid var(--line);
    border-left: 1px solid var(--line);
}

.mask {
    height: 106px;
    background: #000;
}

.page .selection-view + .actions {
    height: 25px;
}
```
FILE: ruler.js
```
// Horizontal ruler: a long tick with a number every 250 units
const ruler = document.getElementById('ruler');
const STEP = 10.55;
const ORIGIN = 228;
const NS = 'http://www.w3.org/2000/svg';

for (let i = -21; ORIGIN + i * STEP < ruler.clientWidth; i++) {
    const x = Math.round(ORIGIN + i * STEP);
    const major = i % 10 === 0;
    const tick = document.createElementNS(NS, 'rect');
    tick.setAttribute('x', x);
    tick.setAttribute('y', major ? 1 : 8);
    tick.setAttribute('width', 1);
    tick.setAttribute('height', 12);
    tick.setAttribute('fill', '#222');
    ruler.appendChild(tick);

    if (major) {
        const label = document.createElementNS(NS, 'text');
        label.setAttribute('x', x + 2);
        label.setAttribute('y', 9);
        label.textContent = i * 25;
        ruler.appendChild(label);
    }
}

// Cursor marker
const marker = document.createElementNS(NS, 'path');
marker.setAttribute('d', 'M294 8h8l-4 4z');
ruler.appendChild(marker);
```
